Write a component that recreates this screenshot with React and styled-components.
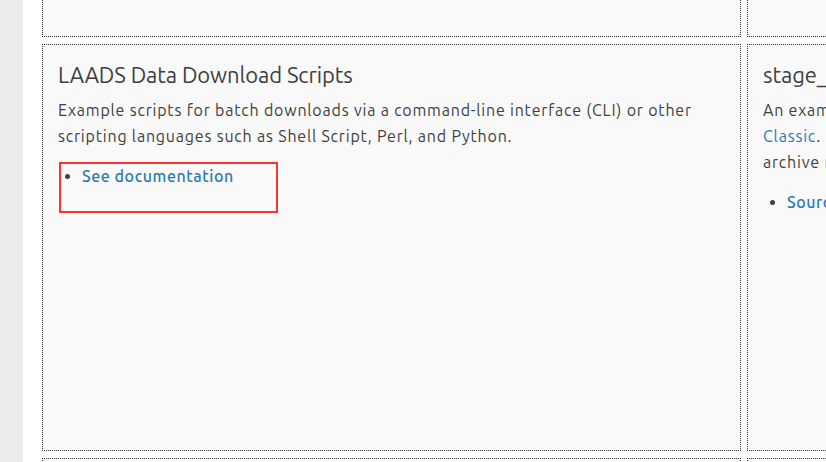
import React from "react";
import styled, { createGlobalStyle } from "styled-components";

const Global = createGlobalStyle`
  html, body { margin: 0; padding: 0; background: #ffffff; overflow: hidden; }
  body { font-family: "Ubuntu", Lato, "Open Sans", sans-serif; }
`;

const Page = styled.div`
  display: flex;
  height: 462px;
  overflow: hidden;
`;

const SideStrip = styled.div`
  width: 23px;
  flex: none;
  background: #ebebeb;
`;

const Main = styled.div`
  flex: 1;
  padding-left: 19px;
  overflow: hidden;
`;

const Grid = styled.div`
  display: grid;
  grid-template-columns: 699px 699px;
  grid-auto-rows: 407px;
  column-gap: 6px;
  row-gap: 7px;
  margin-top: -370px;
`;

const Panel = styled.div`
  border: 1px dotted #333;
  background: #f9f9f9;
  padding: 15px;
  box-sizing: border-box;
  color: #3f3f3f;
  overflow: hidden;
`;

const Title = styled.h3`
  margin: 0 0 7px;
  font-size: 22px;
  line-height: 30px;
  font-weight: 400;
  letter-spacing: -0.1px;
  color: #3f3f3f;
  white-space: nowrap;
`;

const Text = styled.p`
  margin: 0 0 14px;
  font-size: 16px;
  line-height: 26px;
  letter-spacing: 0.8px;
  color: #3f3f3f;
  white-space: nowrap;
`;

const Link = styled.a`
  color: #2a7ab5;
  text-decoration: none;
  font-weight: ${(p) => (p.$strong ? 500 : 400)};
  letter-spacing: ${(p) => (p.$strong ? "0.55px" : "inherit")};
`;

const ListWrap = styled.div`
  position: relative;
`;

const List = styled.ul`
  margin: 0;
  padding-left: 24px;
  font-size: 16px;
  line-height: 26px;
  color: #3f3f3f;
  white-space: nowrap;
`;

const Highlight = styled.div`
  position: absolute;
  left: 1px;
  top: -1px;
  width: 219px;
  height: 51px;
  border: 2px solid #ff3333;
  box-sizing: border-box;
  pointer-events: none;
`;

export default function App() {
  return (
    <>
      <Global />
      <Page>
        <SideStrip />
        <Main>
          <Grid>
            <Panel />
            <Panel />
            <Panel>
              <Title>LAADS Data Download Scripts</Title>
              <Text>
                Example scripts for batch downloads via a command-line interface (CLI) or other
                <br />
                scripting languages such as Shell Script, Perl, and Python.
              </Text>
              <ListWrap>
                <List>
                  <li>
                    <Link $strong href="#">See documentation</Link>
                  </li>
                </List>
                <Highlight />
              </ListWrap>
            </Panel>
            <Panel>
              <Title>stage_laads_data.py</Title>
              <Text>
                An example script for staging data
                <br />
                <Link href="#">Classic</Link>. It stages files
                <br />
                archive request.
              </Text>
              <List>
                <li>
                  <Link $strong href="#">Source code</Link>
                </li>
              </List>
            </Panel>
            <Panel />
            <Panel />
          </Grid>
        </Main>
      </Page>
    </>
  );
}
